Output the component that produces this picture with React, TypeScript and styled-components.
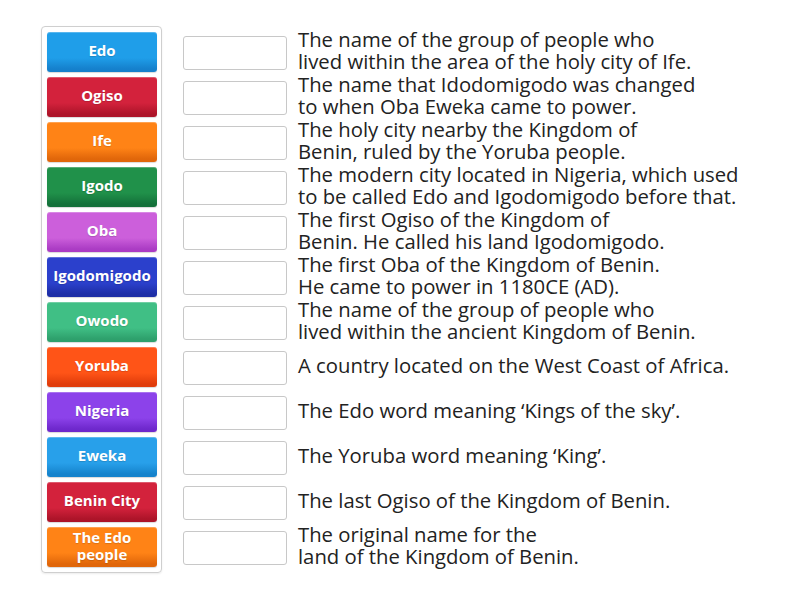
import React from "react";
import styled, { createGlobalStyle } from "styled-components";

const Global = createGlobalStyle`
  html, body { margin: 0; padding: 0; background: #fff; }
  body { font-family: "Open Sans", "Liberation Sans", sans-serif; }
`;

const Page = styled.div`
  display: flex;
  align-items: flex-start;
  padding: 26px 0 0 41px;
  width: 800px;
  height: 600px;
  box-sizing: border-box;
`;

const TilePanel = styled.div`
  display: flex;
  flex-direction: column;
  gap: 5px;
  padding: 5px 4px 5px 5px;
  border: 1px solid #cfcfcf;
  border-radius: 4px;
  box-sizing: border-box;
  width: 121px;
  box-shadow: 0 1px 2px rgba(0,0,0,0.08);
`;

const Tile = styled.div<{ $c: string; $d: string }>`
  height: 40px;
  width: 110px;
  box-sizing: border-box;
  border-radius: 3px;
  background: linear-gradient(to bottom, ${p => p.$c} 0%, ${p => p.$c} 70%, ${p => p.$d} 100%);
  border-bottom: 3px solid ${p => p.$d};
  box-shadow: 0 1px 1px rgba(0,0,0,0.15), inset 0 1px 0 rgba(255,255,255,0.25);
  display: flex;
  align-items: center;
  justify-content: center;
  text-align: center;
  color: #fff;
  font-family: "Open Sans", sans-serif;
  font-weight: 700;
  font-size: 15px;
  line-height: 17px;
  text-shadow: 0 1px 1px rgba(0,0,0,0.15);
`;

const Rows = styled.div`
  display: flex;
  flex-direction: column;
  margin-left: 21px;
  margin-top: 4px;
`;

const Row = styled.div`
  height: 45px;
  display: flex;
  align-items: center;
  gap: 11px;
`;

const Slot = styled.div`
  width: 104px;
  height: 34px;
  box-sizing: border-box;
  border: 1px solid #c8c8c8;
  border-radius: 3px;
  background: #fff;
  flex: none;
`;

const Clue = styled.div`
  font-family: "Open Sans", sans-serif;
  font-size: 20.3px;
  line-height: 22px;
  color: #222;
  white-space: nowrap;
  margin-bottom: 6px;
`;

const tiles: [string, string, string][] = [
  ["Edo", "#1f9ee9", "#1580cc"],
  ["Ogiso", "#d3223c", "#ad1429"],
  ["Ife", "#ff8316", "#e0660a"],
  ["Igodo", "#20914a", "#14713a"],
  ["Oba", "#cc5fdb", "#ab3cc4"],
  ["Igodomigodo", "#2b40cc", "#1e2ea6"],
  ["Owodo", "#40bf85", "#2ea06c"],
  ["Yoruba", "#ff5417", "#e03c0b"],
  ["Nigeria", "#8c42ea", "#6e28cc"],
  ["Eweka", "#28a0ea", "#1583cc"],
  ["Benin City", "#d3223c", "#ad1429"],
  ["The Edo\npeople", "#ff8316", "#e0660a"],
];

const clues: string[][] = [
  ["The name of the group of people who", "lived within the area of the holy city of Ife."],
  ["The name that Idodomigodo was changed", "to when Oba Eweka came to power."],
  ["The holy city nearby the Kingdom of", "Benin, ruled by the Yoruba people."],
  ["The modern city located in Nigeria, which used", "to be called Edo and Igodomigodo before that."],
  ["The first Ogiso of the Kingdom of", "Benin. He called his land Igodomigodo."],
  ["The first Oba of the Kingdom of Benin.", "He came to power in 1180CE (AD)."],
  ["The name of the group of people who", "lived within the ancient Kingdom of Benin."],
  ["A country located on the West Coast of Africa."],
  ["The Edo word meaning \u2018Kings of the sky\u2019."],
  ["The Yoruba word meaning \u2018King\u2019."],
  ["The last Ogiso of the Kingdom of Benin."],
  ["The original name for the", "land of the Kingdom of Benin."],
];

export default function App() {
  return (
    <>
      <Global />
      <Page>
        <TilePanel>
          {tiles.map(([label, c, d]) => (
            <Tile key={label} $c={c} $d={d}>
              <span>
                {label.split("\n").map((l, i) => (
                  <React.Fragment key={i}>
                    {i > 0 && <br />}
                    {l}
                  </React.Fragment>
                ))}
              </span>
            </Tile>
          ))}
        </TilePanel>
        <Rows>
          {clues.map((lines, i) => (
            <Row key={i}>
              <Slot />
              <Clue>
                {lines.map((l, j) => (
                  <div key={j}>{l}</div>
                ))}
              </Clue>
            </Row>
          ))}
        </Rows>
      </Page>
    </>
  );
}
